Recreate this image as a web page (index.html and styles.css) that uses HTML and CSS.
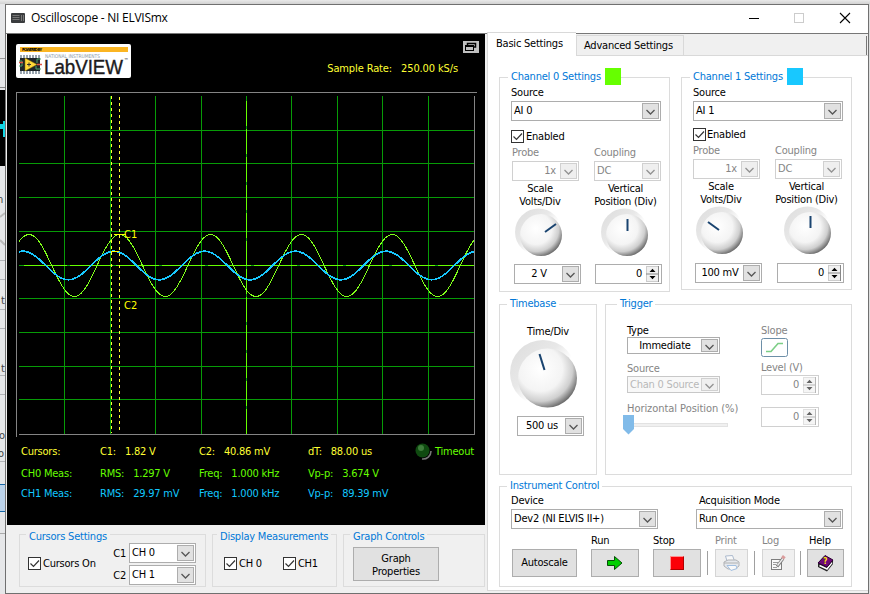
FILE: index.html
```html
<!DOCTYPE html>
<html lang="en">
<head>
    <meta charset="UTF-8">
    <meta name="viewport" content="width=device-width, initial-scale=1.0">
    <title>Oscilloscope - NI ELVISmx</title>
    <link rel="stylesheet" href="styles.css">
</head>
<body>

    <!-- shared drawings -->
    <svg class="defs" width="0" height="0">
        <defs>
            <radialGradient id="disc" cx="0.38" cy="0.35" r="0.68">
                <stop offset="0" stop-color="#fff"/>
                <stop offset="0.55" stop-color="#f4f4f4"/>
                <stop offset="0.8" stop-color="#cfcfcf"/>
                <stop offset="1" stop-color="#6c6c6c"/>
            </radialGradient>
            <linearGradient id="ring" x1="0" y1="0" x2="1" y2="1">
                <stop offset="0" stop-color="#dcdcdc"/>
                <stop offset="0.4" stop-color="#e8e8e8"/>
                <stop offset="0.6" stop-color="#fff"/>
            </linearGradient>
        </defs>
        <symbol id="knob" viewBox="0 0 50 50">
            <circle cx="24.5" cy="25" r="23.5" fill="url(#ring)"/>
            <circle cx="27" cy="28" r="21" fill="url(#disc)"/>
        </symbol>
        <symbol id="arrow" viewBox="0 0 17 16">
            <path d="M4.5 7l4 4 4-4" fill="none" stroke="#555" stroke-width="1.3"/>
        </symbol>
        <symbol id="tick" viewBox="0 0 13 13">
            <rect x="0.5" y="0.5" width="12" height="12" fill="#fff" stroke="#333"/>
            <path d="M2.5 6.5l3 3 5.5-6" fill="none" stroke="#333" stroke-width="1.2"/>
        </symbol>
        <symbol id="spin" viewBox="0 0 13 16">
            <rect x="0.5" y="0.5" width="12" height="15" fill="#f0f0f0" stroke="#ccc"/>
            <path d="M0 8h13M12.5 0v16" stroke="#888"/>
            <path d="M3.5 6l3-3.2 3 3.2zM3.5 10l3 3.2 3-3.2z" fill="#000"/>
        </symbol>
    </svg>

    <svg class="backdrop" width="5" height="590" viewBox="0 4 5 590">
        <rect y="4" width="5" height="590" fill="#e6e7e9"/>
        <rect y="58" width="5" height="1" fill="#999"/>
        <rect y="87" width="5" height="1" fill="#888"/>
        <rect y="90" width="5" height="76" fill="#000"/>
        <path d="M0 124h3v-3h2v16h-2v-8h-3z" fill="#12d6e6"/>
        <path d="M0 217l5-4M0 240l5 5" stroke="#bbb" stroke-width="2"/>
        <path d="M0 260.5h5M0 279.5h5M0 309.500h5M0 328.500h5M0 375.500h5M0 394.500h5M0 461.500h5" stroke="#b2b4b8"/>
        <rect y="484" width="5" height="28" fill="#bcd3ea"/>
        <path d="M0 484.500h5M0 511.500h5" stroke="#1668a8"/>
        <rect y="533" width="5" height="1" fill="#aaa"/>
        <text class="under" x="-3" y="203">n</text>
        <text class="under" x="1" y="304">t</text>
        <text class="under" x="1" y="372">t</text>
        <text class="under" x="-1" y="439">o</text>
        <text class="under" x="-2" y="457">o</text>
    </svg>

    <div class="window">
        <div class="titlebar">
            <svg width="14" height="10" viewBox="0 0 14 10">
                <rect width="14" height="10" rx="1" fill="#3a3c3e"/>
                <path d="M1.500 2.500h7M1.500 4.500h7M1.500 6.500h7M10.500 2v6M12.500 2v6" stroke="#777"/>
            </svg>
            <span class="title">Oscilloscope - NI ELVISmx</span>
            <svg class="controls" width="102" height="12" viewBox="0 0 102 12">
                <path d="M0 6.500h10" stroke="#000"/>
                <rect x="45.500" y="1.500" width="9" height="9" fill="none" stroke="#ccc"/>
                <path d="M91 1l10 10M101 1l-10 10" stroke="#000" stroke-width="1.100"/>
            </svg>
        </div>

        <div class="main">
            <div class="left">
                <div class="screen">
                    <div class="screen-head">
                        <svg class="logo" width="115" height="34" viewBox="0 0 115 34">
                            <rect width="115" height="34" rx="2" fill="#fff"/>
                            <rect x="4" y="3" width="108" height="5" fill="#fbb522"/>
                            <text class="powered" x="6" y="7.200" textLength="20">POWERED BY</text>
                            <text class="ni" x="29" y="13.500" textLength="55" lengthAdjust="spacingAndGlyphs">NATIONAL INSTRUMENTS</text>
                            <path d="M4 12.500h21M4 28.500h21" stroke="#9aa6b0" stroke-width="3" stroke-dasharray="2 1"/>
                            <rect x="4" y="14" width="20" height="13" fill="#20262b"/>
                            <path d="M3 17h3v5h-3M25 15h-4v4M25 25h-5v-3" fill="none" stroke="#4aa56b"/>
                            <path d="M3 18.500h4M21 20.500h5" stroke="#e05546" stroke-width="1.500"/>
                            <path d="M9 14l12 6.500-12 6.500z" fill="#ffd93a" stroke="#8a6d00" stroke-width="0.500"/>
                            <path d="M11 20.500h4M13 18.500v4" stroke="#333"/>
                            <text class="brand" x="28" y="30" textLength="79" lengthAdjust="spacingAndGlyphs">LabVIEW</text>
                            <text class="tm" x="108" y="18">™</text>
                        </svg>
                        <div class="rate"><span>Sample Rate:</span><span>250.00 kS/s</span></div>
                        <svg class="popout" width="16" height="12" viewBox="0 0 16 12">
                            <rect width="16" height="12" fill="#c0c0c0"/>
                            <path d="M4.500 5V2.500h8V6H11" fill="none" stroke="#000" stroke-width="1.500"/>
                            <rect x="2.500" y="5" width="8" height="4.500" fill="#c0c0c0" stroke="#000"/>
                            <path d="M2 5h9" stroke="#000" stroke-width="2"/>
                        </svg>
                    </div>

                    <svg class="graph" width="462" height="346" viewBox="16 92 462 346">
                        <path class="frame" d="M16.500 437V92.500H477M19 434.500H474.500V96"/>
                        <path class="grid" d="M64.500 96V434M110.500 96V434M155.500 96V434M201.500 96V434M246.500 96V434M291.500 96V434M337.500 96V434M382.500 96V434M428.500 96V434"/>
                        <path class="grid" d="M19 130.500H474M19 163.500H474M19 197.500H474M19 231.500H474M19 265.500H474M19 298.500H474M19 332.500H474M19 366.500H474M19 399.500H474"/>
                        <path class="axis" d="M246.500 101V434" stroke-dasharray="25 3"/>
                        <path class="axis" d="M24 265.500H474" stroke-dasharray="43 3"/>
                        <polyline id="ch0" class="wave ch0"/>
                        <polyline id="ch1" class="wave ch1"/>
                        <path class="cursor" d="M111.500 96V433M119.500 97V433"/>
                        <path d="M114 234.500h12M111 251.500h8" stroke="#ffff00"/>
                        <text class="mark" x="124" y="238">C1</text>
                        <text class="mark" x="124" y="309">C2</text>
                    </svg>

                    <div class="readout">
                        <div class="row yellow">
                            <span>Cursors:</span><span>C1:<b>1.82 V</b></span><span>C2:<b>40.86 mV</b></span><span>dT:<b>88.00 us</b></span>
                            <span class="timeout">
                                <svg width="18" height="18" viewBox="0 0 18 18">
                                    <path d="M16 8a8 8 0 0 1-9 8" fill="none" stroke="#777" stroke-width="1.600"/>
                                    <circle cx="7.500" cy="7.500" r="7" fill="#0f4a10"/>
                                    <circle cx="6" cy="5" r="3" fill="#3d7c3a"/>
                                </svg>Timeout
                            </span>
                        </div>
                        <div class="row green">
                            <span>CH0 Meas:</span><span>RMS:<b>1.297 V</b></span><span>Freq:<b>1.000 kHz</b></span><span>Vp-p:<b>3.674 V</b></span>
                        </div>
                        <div class="row blue">
                            <span>CH1 Meas:</span><span>RMS:<b>29.97 mV</b></span><span>Freq:<b>1.000 kHz</b></span><span>Vp-p:<b>89.39 mV</b></span>
                        </div>
                    </div>
                </div>

                <div class="footer">
                    <div class="group cursors">
                        <div class="legend">Cursors Settings</div>
                        <div class="cursor-row">
                            <div class="check"><svg width="13" height="13"><use href="#tick"/></svg>Cursors On</div>
                            <div class="cursor-picks">
                                <div><span>C1</span><div class="select">CH 0<i><svg width="17" height="16"><use href="#arrow"/></svg></i></div></div>
                                <div><span>C2</span><div class="select">CH 1<i><svg width="17" height="16"><use href="#arrow"/></svg></i></div></div>
                            </div>
                        </div>
                    </div>
                    <div class="group measure">
                        <div class="legend">Display Measurements</div>
                        <div class="measure-row">
                            <div class="check"><svg width="13" height="13"><use href="#tick"/></svg>CH 0</div>
                            <div class="check"><svg width="13" height="13"><use href="#tick"/></svg>CH1</div>
                        </div>
                    </div>
                    <div class="group graphs">
                        <div class="legend">Graph Controls</div>
                        <button class="properties">Graph<br>Properties</button>
                    </div>
                </div>
            </div>

            <div class="right">
                <div class="tabs">
                    <div class="tab active">Basic Settings</div>
                    <div class="tab">Advanced Settings</div>
                    <div class="tab-end"></div>
                </div>
                <div class="panel">
                    <div class="channels">
                        <div class="group channel">
                            <div class="legend">Channel 0 Settings<em class="swatch swatch0"></em></div>
                            <div class="label">Source</div>
                            <div class="select wide">AI 0<i><svg width="17" height="16"><use href="#arrow"/></svg></i></div>
                            <div class="check"><svg width="13" height="13"><use href="#tick"/></svg>Enabled</div>
                            <div class="pair names off"><div>Probe</div><div>Coupling</div></div>
                            <div class="pair off boxes">
                                <div class="select right-text">1x<i><svg width="17" height="16"><use href="#arrow"/></svg></i></div>
                                <div class="select">DC<i><svg width="17" height="16"><use href="#arrow"/></svg></i></div>
                            </div>
                            <div class="pair captions"><div>Scale<br>Volts/Div</div><div>Vertical<br>Position (Div)</div></div>
                            <div class="pair knobs">
                                <svg width="50" height="50"><use href="#knob"/><path d="M31 25l11-8"/></svg>
                                <svg width="50" height="50"><use href="#knob"/><path d="M27.500 12v12"/></svg>
                            </div>
                            <div class="pair values">
                                <div class="select center-text">2 V<i><svg width="17" height="16"><use href="#arrow"/></svg></i></div>
                                <div class="number">0<svg width="13" height="16"><use href="#spin"/></svg></div>
                            </div>
                        </div>
                        <div class="group channel second">
                            <div class="legend">Channel 1 Settings<em class="swatch swatch1"></em></div>
                            <div class="label">Source</div>
                            <div class="select wide">AI 1<i><svg width="17" height="16"><use href="#arrow"/></svg></i></div>
                            <div class="check"><svg width="13" height="13"><use href="#tick"/></svg>Enabled</div>
                            <div class="pair names off"><div>Probe</div><div>Coupling</div></div>
                            <div class="pair off boxes">
                                <div class="select right-text">1x<i><svg width="17" height="16"><use href="#arrow"/></svg></i></div>
                                <div class="select">DC<i><svg width="17" height="16"><use href="#arrow"/></svg></i></div>
                            </div>
                            <div class="pair captions"><div>Scale<br>Volts/Div</div><div>Vertical<br>Position (Div)</div></div>
                            <div class="pair knobs">
                                <svg width="50" height="50"><use href="#knob"/><path d="M13 17l11 8"/></svg>
                                <svg width="50" height="50"><use href="#knob"/><path d="M27.500 11v12"/></svg>
                            </div>
                            <div class="pair values">
                                <div class="select center-text">100 mV<i><svg width="17" height="16"><use href="#arrow"/></svg></i></div>
                                <div class="number">0<svg width="13" height="16"><use href="#spin"/></svg></div>
                            </div>
                        </div>
                    </div>

                    <div class="timing">
                        <div class="group timebase">
                            <div class="legend">Timebase</div>
                            <div class="time-label">Time/Div</div>
                            <svg class="big-knob" width="70" height="70" viewBox="0 0 70 70">
                                <circle cx="34" cy="34" r="33" fill="url(#ring)"/>
                                <circle cx="38.500" cy="39" r="29.500" fill="url(#disc)"/>
                                <path d="M30.500 15l5 16"/>
                            </svg>
                            <div class="select center-text">500 us<i><svg width="17" height="16"><use href="#arrow"/></svg></i></div>
                        </div>
                        <div class="group trigger">
                            <div class="legend">Trigger</div>
                            <div class="trigger-body">
                                <div class="trigger-left">
                                    <div class="name">Type</div>
                                    <div class="select center-text">Immediate<i><svg width="17" height="16"><use href="#arrow"/></svg></i></div>
                                    <div class="name off">Source</div>
                                    <div class="select faded">Chan 0 Source<i><svg width="17" height="16"><use href="#arrow"/></svg></i></div>
                                    <div class="name off horizontal">Horizontal Position (%)</div>
                                    <svg class="slider" width="106" height="20" viewBox="0 0 106 20">
                                        <rect x="5.500" y="8.500" width="99" height="3" fill="#f0f0f0" stroke="#e2e2e2"/>
                                        <path d="M0 0h11v14l-5.500 5.500L0 14z" fill="#81bbe9"/>
                                    </svg>
                                </div>
                                <div class="trigger-right off">
                                    <div class="name">Slope</div>
                                    <svg class="slope" width="27" height="19" viewBox="0 0 27 19">
                                        <rect x="0.500" y="0.500" width="26" height="18" rx="2" fill="#fff" stroke="#6d8fa8"/>
                                        <path d="M5 13.500h5l7-8h5" fill="none" stroke="#7cce86" stroke-width="1.600"/>
                                    </svg>
                                    <div class="name">Level (V)</div>
                                    <div class="number">0<svg width="13" height="16"><use href="#spin"/></svg></div>
                                    <div class="number last">0<svg width="13" height="16"><use href="#spin"/></svg></div>
                                </div>
                            </div>
                        </div>
                    </div>

                    <div class="group instrument">
                        <div class="legend">Instrument Control</div>
                        <div class="devices">
                            <div class="device">Device<div class="select">Dev2 (NI ELVIS II+)<i><svg width="17" height="16"><use href="#arrow"/></svg></i></div></div>
                            <div class="mode"><span>Acquisition Mode</span><div class="select">Run Once<i><svg width="17" height="16"><use href="#arrow"/></svg></i></div></div>
                        </div>
                        <div class="actions">
                            <div class="action auto"><button>Autoscale</button></div>
                            <div class="action run">Run<button>
                                <svg width="16" height="14" viewBox="0 0 16 14"><path d="M0.500 4.500h7v-4l7.500 6.500-7.500 6.500v-4h-7z" fill="#00d000" stroke="#074d07"/></svg>
                            </button></div>
                            <div class="action stop">Stop<button>
                                <svg width="14" height="14" viewBox="0 0 14 14"><rect width="14" height="14" fill="#b00000"/><path d="M0 14V0h14l-1 1H1v12z" fill="#ff9090"/><rect x="1" y="1" width="12" height="12" fill="#fb0007"/></svg>
                            </button></div>
                            <div class="bar"></div>
                            <div class="action print off">Print<button>
                                <svg width="17" height="16" viewBox="0 0 17 16">
                                    <path d="M4 6L2.500 1l7-.5 2 5.500z" fill="#fff" stroke="#7f97b8"/>
                                    <path d="M1 7l4-2h8l3 2v4l-4 3H5l-4-3z" fill="#dfe4ec" stroke="#85898f"/>
                                    <path d="M4 10.500h9l1 3-6 2z" fill="#fff" stroke="#6f9fd6"/>
                                    <path d="M1 8h14" stroke="#888"/>
                                </svg>
                            </button></div>
                            <div class="bar"></div>
                            <div class="action log off">Log<button>
                                <svg width="17" height="16" viewBox="0 0 17 16">
                                    <rect x="1.500" y="4.500" width="10" height="10" fill="#fff" stroke="#333"/>
                                    <path d="M3 7.500h5M3 9.500h3M3 12.500h4" stroke="#666"/>
                                    <path d="M7 11.500l6-8" stroke="#333" stroke-width="3"/>
                                    <path d="M7.500 10.500l5.500-7" stroke="#eee" stroke-width="1.300"/>
                                    <path d="M12.500 3.500l1.800-2.300" stroke="#c66" stroke-width="3.500"/>
                                </svg>
                            </button></div>
                            <div class="bar"></div>
                            <div class="action help"><span>Help</span><button>
                                <svg width="17" height="17" viewBox="0 0 17 17">
                                    <path d="M1 8v4l9 4.500 6-7.500V5z" fill="#222"/>
                                    <path d="M2.500 10.500l7.500 3.500 5-6.500" fill="none" stroke="#fff" stroke-width="1.500"/>
                                    <path d="M1 8l7-7.500 8 4.500-6 7z" fill="#6d0a78" stroke="#2b0030"/>
                                    <text class="help-mark" x="6.200" y="9">?</text>
                                </svg>
                            </button></div>
                        </div>
                    </div>
                </div>
            </div>
        </div>
    </div>

    <script>
        // one point per horizontal pixel of the plot
        function drawWave(id, peak, amplitude) {
            let points = [];
            for (let x = 19; x <= 474; x++) {
                let y = 265.5 - amplitude * Math.cos(2 * Math.PI * (x - peak) / 90.8);
                points.push(x + "," + y.toFixed(1));
            }
            document.getElementById(id).setAttribute("points", points.join(" "));
        }

        drawWave("ch0", 29, 31);
        drawWave("ch1", 23, 14.2);
    </script>

</body>
</html>
```

FILE: styles.css
```css
* {
    box-sizing: border-box;
}
body {
    margin: 0;
    width: 870px;
    height: 594px;
    overflow: hidden;
    padding-top: 4px;
    display: flex;
    background: linear-gradient(#e9e9e9, #d2d2d2 4px, #dedede 5px);
    font-family: "DejaVu Sans Condensed", "DejaVu Sans", sans-serif;
    font-stretch: condensed;
    font-size: 11px;
    letter-spacing: -0.22px;
    line-height: 14px;
    color: #000;
}
svg {
    display: block;
    flex: none;
}
.defs {
    position: absolute;
}
.under {
    font-size: 11px;
    fill: #444;
}
.window {
    width: 864px;
    height: 590px;
    border: 1px solid #707070;
    background: #f0f0f0;
}
.titlebar {
    height: 28px;
    padding: 0 17px 2px 5px;
    display: flex;
    align-items: center;
    background: #fff;
}
.title {
    margin-left: 6px;
    font-family: "Open Sans", sans-serif;
    font-stretch: normal;
    font-size: 12px;
    letter-spacing: -0.25px;
}
.controls {
    margin-left: auto;
}
.main {
    height: 560px;
    display: flex;
    border-top: 1px solid #777;
}
.left {
    width: 481px;
    padding-left: 1px;
}
.screen {
    width: 478px;
    height: 491px;
    background: #000;
}
.screen-head {
    height: 58px;
    padding: 7px 6px 0 9px;
    display: flex;
}
.logo {
    margin-top: 3px;
}
.powered {
    font-size: 4px;
    font-weight: bold;
    letter-spacing: 0;
}
.ni {
    font-size: 5px;
    letter-spacing: 0;
    fill: #8b9aa8;
}
.brand {
    font-family: "Liberation Sans", sans-serif;
    font-size: 20.5px;
    letter-spacing: 0;
    fill: #1c1a1c;
    stroke: #1c1a1c;
    stroke-width: 0.4;
}
.tm {
    font-size: 5px;
}
.rate {
    margin: 21px 5px 0 auto;
    display: flex;
    gap: 9px;
    color: #ffff33;
    letter-spacing: -0.12px;
}
.graph {
    margin-left: 9px;
    shape-rendering: crispEdges;
}
.frame, .grid, .axis, .cursor, .wave {
    fill: none;
}
.frame {
    stroke: #848484;
}
.grid {
    stroke: #079b07;
}
.axis {
    stroke: #66ff00;
}
.cursor {
    stroke: #ffff33;
    stroke-dasharray: 3 3;
}
.wave.ch0 {
    stroke: #80ff1a;
}
.wave.ch1 {
    stroke: #18c8ff;
    stroke-width: 1.7;
}
.mark {
    fill: #ffff00;
    letter-spacing: 0.2px;
}
.readout {
    padding: 1px 0 0 14px;
}
.row {
    height: 20px;
    display: grid;
    grid-template-columns: 79px 99px 109px 107px 60px;
    align-items: center;
    white-space: nowrap;
}
.row.yellow {
    height: 25px;
}
.row b {
    margin-left: 9px;
    font-weight: normal;
}
.yellow {
    color: #ffff33;
}
.green {
    color: #66ff00;
}
.blue {
    color: #12c8ff;
}
.timeout {
    display: flex;
    align-items: center;
    gap: 2px;
    color: #66ff00;
}
.group {
    border: 1px solid #dcdcdc;
}
.legend {
    width: fit-content;
    height: 17px;
    margin-top: -10px;
    margin-left: 8px;
    padding: 0 3px;
    display: flex;
    align-items: center;
    background: #fff;
    color: #0078d7;
    white-space: nowrap;
}
.footer {
    display: flex;
    gap: 6px;
    padding: 9px 0 0 12px;
}
.footer .group {
    height: 53px;
}
.footer .legend {
    height: 14px;
    margin-top: -6px;
    margin-left: 6px;
    padding-top: 1px;
    background: #f0f0f0;
}
.cursors {
    width: 187px;
}
.measure {
    width: 125px;
}
.measure .legend {
    margin-left: 4px;
}
.graphs {
    width: 142px;
}
.check {
    display: flex;
    align-items: center;
    gap: 2px;
    height: 13px;
}
.cursor-row {
    display: flex;
    justify-content: space-between;
    padding: 0 9px 0 8px;
}
.cursor-row .check {
    margin-top: 14px;
}
.cursor-picks > div {
    display: flex;
    align-items: center;
    gap: 3px;
    margin-bottom: 2px;
}
.cursor-picks span {
    margin-top: 2px;
}
.cursor-picks .select {
    width: 67px;
}
.measure-row {
    display: flex;
    padding: 14px 0 0 11px;
    gap: 21px;
}
.select {
    height: 20px;
    padding-left: 2px;
    border: 1px solid #adadad;
    background: #fff;
    line-height: 17px;
    display: flex;
    justify-content: space-between;
    white-space: nowrap;
}
.select i {
    width: 17px;
    margin: 1px;
    border: 1px solid #adadad;
    background: #e1e1e1;
    overflow: hidden;
    display: flex;
    align-items: center;
    justify-content: center;
}
.right-text {
    justify-content: flex-end;
    gap: 3px;
}
.center-text::before {
    content: "";
}
.number {
    height: 20px;
    padding-right: 2px;
    border: 1px solid #adadad;
    background: #fff;
    display: flex;
    align-items: center;
    justify-content: flex-end;
    gap: 4px;
}
button {
    padding: 0;
    border: 1px solid #adadad;
    background: #e1e1e1;
    color: #000;
    font: inherit;
    letter-spacing: inherit;
    display: flex;
    align-items: center;
    justify-content: center;
}
.properties {
    width: 86px;
    height: 34px;
    margin: 4px 0 0 9px;
    padding-top: 1px;
    line-height: 13px;
}
.right {
    width: 381px;
}
.tabs {
    height: 22px;
    display: flex;
    align-items: flex-end;
    border-bottom: 1px solid #d9d9d9;
}
.tab {
    width: 108px;
    height: 20px;
    padding-left: 7px;
    border: 1px solid #d9d9d9;
    border-bottom: none;
    line-height: 19px;
    white-space: nowrap;
}
.tab.active {
    width: 89px;
    height: 24px;
    margin-bottom: -1px;
    padding-left: 8px;
    border-right: none;
    background: #fff;
    line-height: 21px;
}
.tab-end {
    width: 1px;
    height: 19px;
    margin: 0 1px 0 auto;
    background: #777;
}
.panel {
    height: 535px;
    padding: 21px 0 0 11px;
    border-left: 1px solid #d9d9d9;
    border-bottom: 1px solid #d9d9d9;
    background: #fff;
}
.channels {
    height: 227px;
    display: flex;
    align-items: flex-start;
    gap: 11px;
}
.channel {
    width: 171px;
    height: 215px;
}
.channel.second {
    height: 213px;
}
.channel .label,
.channel .check,
.channel .wide {
    margin-left: 11px;
}
.channel .label, .names {
    height: 14px;
    line-height: 16px;
}
.swatch {
    width: 16px;
    height: 17px;
    margin-left: 4px;
    margin-right: -3px;
}
.swatch0 {
    background: #66ff00;
}
.swatch1 {
    background: #18c8ff;
}
.wide {
    width: 150px;
    margin-top: 2px;
}
.channel .check {
    margin-top: 9px;
    line-height: 12px;
    padding-bottom: 0;
}
.channel.second .check {
    margin-top: 7px;
    gap: 1px;
}
.pair {
    display: grid;
    grid-template-columns: 67px 67px;
    column-gap: 15px;
    margin: 2px 0 0 12px;
}
.second .pair {
    margin-left: 11px;
}
.off {
    color: #858585;
}
.off .select, .off .number {
    border-color: #d0d0d0;
}
.off .select i, .faded i {
    background: #efefef;
    border-color: #d0d0d0;
}
.off svg, .faded svg {
    opacity: 0.6;
}
.pair.captions {
    margin-top: 1px;
    line-height: 13px;
    text-align: center;
    white-space: nowrap;
}
.captions div:first-child {
    margin-right: 11px;
}
.captions div:last-child {
    margin: 0 3px 0 -1px;
}
.pair.knobs {
    margin: -1px 0 0 14px;
    grid-template-columns: 50px 50px;
    column-gap: 36px;
}
.second .pair.knobs {
    margin-left: 13px;
    column-gap: 38px;
}
.knobs path, .big-knob path {
    fill: none;
    stroke: #1a4470;
    stroke-width: 2;
}
.pair.values {
    margin: 7px 0 0 14px;
    column-gap: 14px;
}
.second .pair.values {
    margin: 8px 0 0 13px;
    column-gap: 15px;
}
.timing {
    height: 182px;
    display: flex;
    align-items: flex-start;
    gap: 8px;
}
.timing .group {
    height: 171px;
}
.timebase {
    width: 98px;
}
.timebase .legend, .instrument .legend {
    margin-left: 7px;
    padding-top: 1px;
}
.time-label {
    margin-top: 12px;
    height: 14px;
    line-height: 16px;
    text-align: center;
}
.big-knob {
    margin: 1px 0 0 9px;
}
.timebase .select {
    width: 67px;
    margin: 7px 0 0 17px;
}
.trigger {
    width: 247px;
}
.trigger .legend {
    margin-left: 11px;
    padding-top: 1px;
}
.trigger-body {
    display: flex;
    padding: 11px 0 0 21px;
}
.trigger-left {
    width: 134px;
    white-space: nowrap;
}
.name {
    height: 14px;
    line-height: 16px;
}
.trigger-left .select {
    width: 93px;
    height: 17px;
    margin-bottom: 7px;
    line-height: 15px;
}
.trigger-left .name.off {
    margin-bottom: 1px;
    line-height: 15px;
}
.trigger-left .name.horizontal {
    line-height: 18px;
    letter-spacing: -0.05px;
}
.select.faded {
    color: #b8b8b8;
    background: #f8f8f8;
    border-color: #c8c8c8;
}
.trigger-left .slider {
    margin-left: -4px;
    opacity: 1;
}
.trigger-right .slope {
    margin: 1px 0 3px;
    opacity: 1;
}
.trigger-right .number {
    width: 58px;
    margin-top: 1px;
}
.trigger-right .last {
    margin-top: 12px;
}
.instrument {
    width: 353px;
    height: 101px;
}
.devices {
    display: flex;
    gap: 38px;
    margin-left: 11px;
}
.devices .select {
    width: 147px;
    margin-top: 1px;
}
.mode span {
    margin-left: 3px;
}
.actions {
    display: flex;
    align-items: flex-end;
    margin: 5px 0 0 12px;
}
.action {
    display: flex;
    flex-direction: column;
    gap: 1px;
}
.action button {
    width: 48px;
    height: 28px;
}
.auto button {
    width: 65px;
}
.run {
    margin: 0 14px;
}
.bar {
    width: 1px;
    height: 24px;
    margin: 0 7px 2px 6px;
    background: #a0a0a0;
}
.log + .bar {
    margin: 0 6px 2px 5px;
}
.print button, .log button {
    width: 33px;
    background: #f0f0f0;
    border-color: #d5d5d5;
}
.help button {
    width: 37px;
}
.help span {
    margin-left: 2px;
}
.help-mark {
    font-size: 8px;
    font-weight: bold;
    fill: #ffe600;
}
```
